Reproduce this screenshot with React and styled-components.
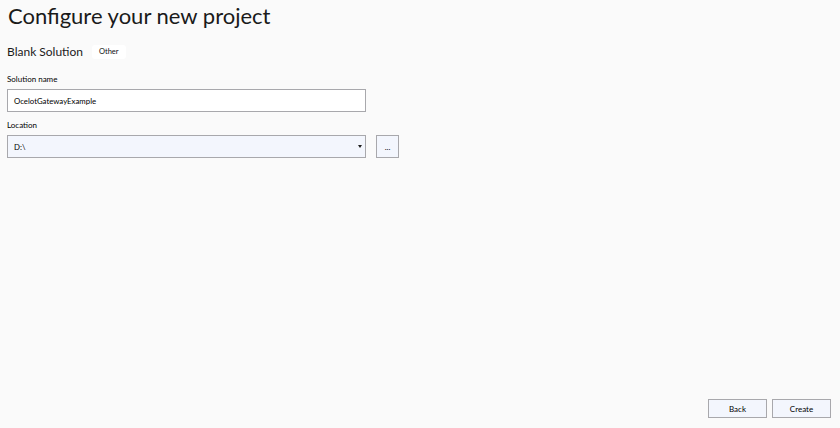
import React from 'react';
import styled, { createGlobalStyle } from 'styled-components';

const GlobalStyle = createGlobalStyle`
  html, body {
    margin: 0;
    padding: 0;
    height: 100%;
    background: #fafafa;
  }
  #root {
    height: 100%;
  }
`;

const Page = styled.div`
  height: 100%;
  box-sizing: border-box;
  display: flex;
  flex-direction: column;
  padding: 0 9px 10px 7px;
  font-family: Lato, "Noto Sans", sans-serif;
  color: #111;
`;

const Title = styled.h1`
  margin: 0;
  font-size: 22px;
  font-weight: 400;
  line-height: 31px;
  padding-left: 1px;
  color: #1a1a1a;
`;

const TemplateRow = styled.div`
  display: flex;
  align-items: center;
  gap: 9px;
  margin-top: 12px;
`;

const TemplateName = styled.span`
  font-size: 12px;
  line-height: 18px;
  color: #1a1a1a;
`;

const Tag = styled.span`
  background: #fff;
  border-radius: 3px;
  padding: 1px 7px;
  font-size: 7.5px;
  line-height: 12px;
  color: #111;
`;

const Field = styled.div`
  display: flex;
  flex-direction: column;
  margin-top: ${p => p.$top}px;
`;

const Label = styled.label`
  font-size: 8px;
  line-height: 12px;
  margin-bottom: 4px;
  color: #000;
`;

const Row = styled.div`
  display: flex;
  align-items: center;
  gap: 10px;
`;

const Input = styled.div`
  box-sizing: border-box;
  width: 359px;
  height: 23px;
  border: 1px solid #a8a8ac;
  background: #fff;
  display: flex;
  align-items: center;
  padding-left: 6px;
  font-size: 7.8px;
  color: #000;
`;

const Combo = styled(Input)`
  background: #f3f6fd;
  padding-right: 0;
  justify-content: space-between;
`;

const Arrow = styled.span`
  width: 8px;
  height: 100%;
  display: flex;
  align-items: center;
  justify-content: center;
  margin-right: 1px;

  &::after {
    content: "";
    border-left: 2.5px solid transparent;
    border-right: 2.5px solid transparent;
    border-top: 3px solid #1e1e1e;
  }
`;

const SmallButton = styled.button`
  box-sizing: border-box;
  width: 23px;
  height: 23px;
  border: 1px solid #a8a8ac;
  background: #f3f6fd;
  font-family: inherit;
  font-size: 8px;
  color: #000;
  padding: 0;
`;

const Spacer = styled.div`
  flex: 1;
`;

const Footer = styled.div`
  display: flex;
  justify-content: flex-end;
  gap: 5px;
`;

const FooterButton = styled.button`
  box-sizing: border-box;
  width: 59px;
  height: 19px;
  border: 1px solid #a8a8ac;
  background: #f3f6fd;
  font-family: inherit;
  font-size: 8px;
  color: #000;
  padding: 0;
`;

export default function App() {
  return (
    <>
      <GlobalStyle />
      <Page>
        <Title>Configure your new project</Title>
        <TemplateRow>
          <TemplateName>Blank Solution</TemplateName>
          <Tag>Other</Tag>
        </TemplateRow>
        <Field $top={12}>
          <Label>Solution name</Label>
          <Input>OcelotGatewayExample</Input>
        </Field>
        <Field $top={7}>
          <Label>Location</Label>
          <Row>
            <Combo>
              <span>D:\</span>
              <Arrow />
            </Combo>
            <SmallButton>...</SmallButton>
          </Row>
        </Field>
        <Spacer />
        <Footer>
          <FooterButton>Back</FooterButton>
          <FooterButton>Create</FooterButton>
        </Footer>
      </Page>
    </>
  );
}
